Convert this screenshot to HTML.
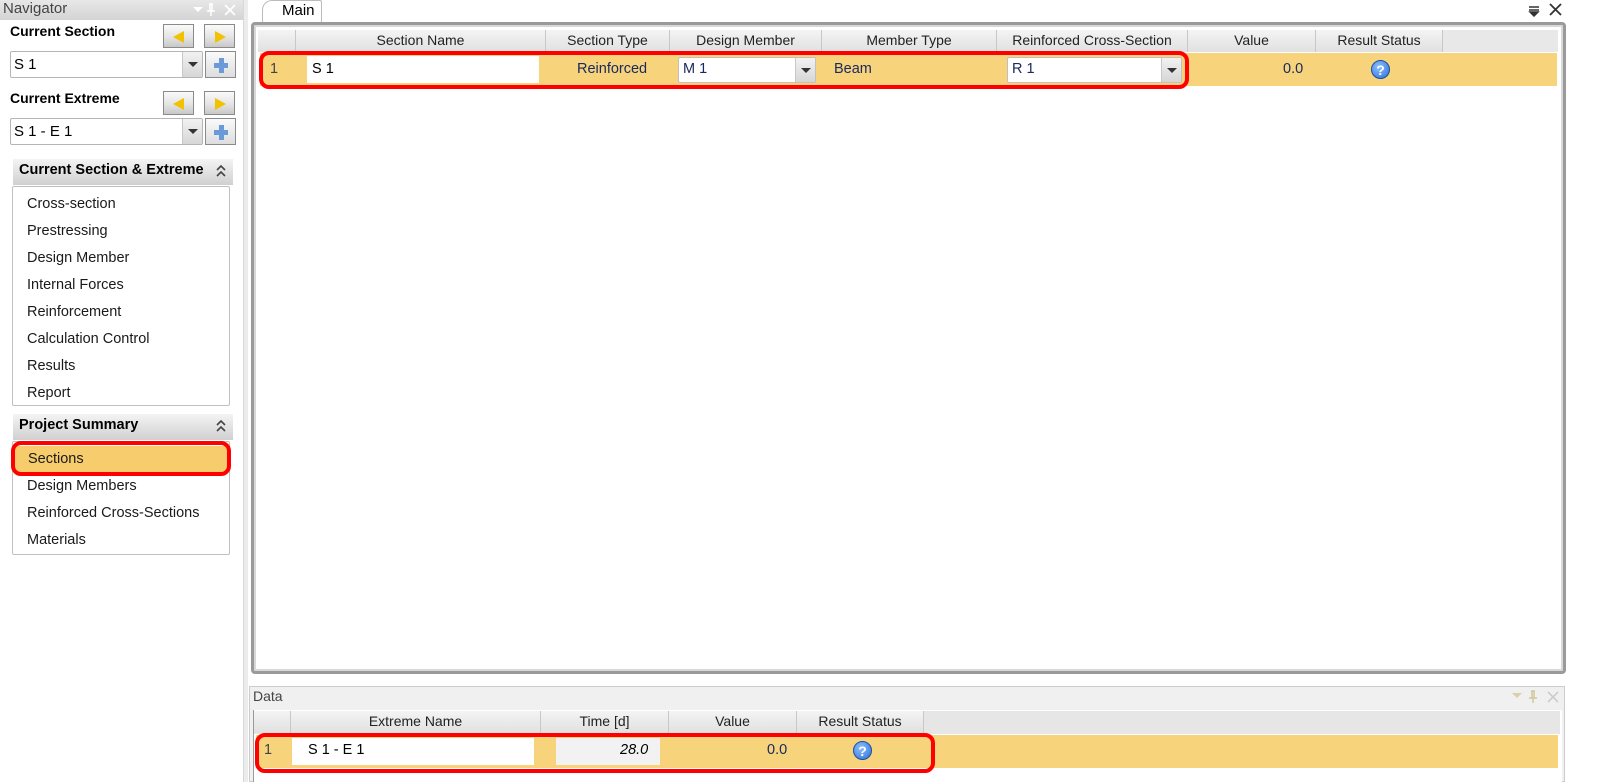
<!DOCTYPE html>
<html><head><meta charset="utf-8"><style>
*{box-sizing:border-box;margin:0;padding:0}
body{width:1598px;height:782px;position:relative;overflow:hidden;background:#fff;font-family:"Segoe UI","Liberation Sans",sans-serif;font-size:14px;color:#000}
.a{position:absolute}
.btn{position:absolute;width:31px;height:24px;border:1px solid #8a8a8a;background:linear-gradient(#fafafa,#e4e4e4 55%,#c8c8c8);}
.tri{position:absolute;top:6px;width:0;height:0;border-top:6px solid transparent;border-bottom:6px solid transparent}
.combo{position:absolute;left:10px;width:193px;height:27px;border:1px solid #b5b5b5;border-radius:2px;background:#fff;padding:4px 0 0 3px;font-size:15px}
.dd{position:absolute;right:0;top:0;width:20px;height:25px;background:linear-gradient(#f2f2f2,#d6d6d6);border-left:1px solid #c8c8c8}
.dd:after{content:"";position:absolute;left:5px;top:10px;border-left:5px solid transparent;border-right:5px solid transparent;border-top:5px solid #333}
.plus{position:absolute;left:205px;width:31px;height:27px;border:1px solid #8a8a8a;background:linear-gradient(#fafafa,#ddd)}
.plus:before{content:"";position:absolute;left:8px;top:11px;width:14px;height:5px;background:#6a9ad8}
.plus:after{content:"";position:absolute;left:13px;top:6px;width:5px;height:15px;background:#6a9ad8}
.ph{position:absolute;left:13px;width:220px;height:26px;background:linear-gradient(#f4f4f4,#d0d0d0);font-weight:bold;font-size:14.5px}
.ph .t{position:absolute;left:6px;top:3px;width:188px;white-space:nowrap;overflow:hidden}
.ph svg{position:absolute;right:7px;top:6px}
.list{position:absolute;left:12px;width:218px;border:1px solid #c0c0c0;border-radius:2px;background:#fff}
.list div{height:27px;padding:5px 0 0 14px;font-size:14.5px;color:#1a1a1a}
.hdr{position:absolute;height:22px;background:linear-gradient(#f4f4f4,#e0e0e0);border-right:1px solid #c8c8c8;text-align:center;font-size:14px;padding-top:2px;color:#222}
.cell{position:absolute;font-size:14.5px;color:#1a2a60}
.red{position:absolute;border:4px solid #f00;border-radius:10px}
.q{position:absolute;width:19px;height:19px;border-radius:50%;background:radial-gradient(circle at 40% 35%,#8ec0ff,#2a6fd8);color:#fff;font-weight:bold;font-size:14px;text-align:center;line-height:19px;border:1px solid #1b4fa0;font-family:"Liberation Sans",sans-serif}
</style></head><body>

<!-- Navigator -->
<div class="a" style="left:0;top:0;width:243px;height:20px;background:linear-gradient(#e8e8e8,#d4d4d4);font-size:15px;color:#444;padding:0 0 0 3px">Navigator
<span class="a" style="left:193px;top:7px;border-left:5px solid transparent;border-right:5px solid transparent;border-top:5px solid #fff"></span>
<svg class="a" style="left:206px;top:3px" width="10" height="14"><path d="M3 1h4M4 1v7M6 1v7M1 8h8M5 8v5" stroke="#fff" stroke-width="1.5" fill="none"/></svg>
<svg class="a" style="left:224px;top:4px" width="12" height="12"><path d="M1 1L11 11M11 1L1 11" stroke="#fff" stroke-width="1.6"/></svg>
</div>
<div class="a" style="left:243px;top:0;width:5px;height:782px;background:#ececec;border-left:1px solid #d8d8d8"></div>

<div class="a" style="left:10px;top:23px;font-weight:bold;font-size:14px">Current Section</div>
<div class="btn" style="left:163px;top:24px"><div class="tri" style="left:9px;border-right:11px solid #f2c200"></div></div>
<div class="btn" style="left:204px;top:24px"><div class="tri" style="left:10px;border-left:11px solid #f2c200"></div></div>
<div class="combo" style="top:51px">S 1<div class="dd"></div></div>
<div class="plus" style="top:51px"></div>

<div class="a" style="left:10px;top:90px;font-weight:bold;font-size:14px">Current Extreme</div>
<div class="btn" style="left:163px;top:91px"><div class="tri" style="left:9px;border-right:11px solid #f2c200"></div></div>
<div class="btn" style="left:204px;top:91px"><div class="tri" style="left:10px;border-left:11px solid #f2c200"></div></div>
<div class="combo" style="top:118px">S 1 - E 1<div class="dd"></div></div>
<div class="plus" style="top:118px"></div>

<div class="ph" style="top:159px"><div class="t">Current Section &amp; Extreme</div><svg width="10" height="12"><path d="M1 5L5 1L9 5M1 11L5 7L9 11" stroke="#444" stroke-width="1.6" fill="none"/></svg></div>
<div class="list" style="top:186px;height:220px;padding-top:4px">
<div>Cross-section</div><div>Prestressing</div><div>Design Member</div><div>Internal Forces</div><div>Reinforcement</div><div>Calculation Control</div><div>Results</div><div>Report</div></div>

<div class="ph" style="top:414px"><div class="t">Project Summary</div><svg width="10" height="12"><path d="M1 5L5 1L9 5M1 11L5 7L9 11" stroke="#444" stroke-width="1.6" fill="none"/></svg></div>
<div class="list" style="top:441px;height:114px;padding-top:4px">
<div style="background:#f7cc6c;margin:0 1px">Sections</div><div>Design Members</div><div>Reinforced Cross-Sections</div><div>Materials</div></div>
<div class="red" style="left:11px;top:441px;width:220px;height:35px"></div>

<!-- Main tab -->
<div class="a" style="left:262px;top:0;width:60px;height:23px;background:#fff;border:1px solid #bbb;border-bottom:none;border-radius:10px 2px 0 0;font-size:15px;padding:1px 0 0 19px">Main</div>
<svg class="a" style="left:1528px;top:5px" width="12" height="12"><path d="M1 2h10M1 5h10M2 7L6 11L10 7Z" stroke="#333" stroke-width="1.5" fill="#333"/></svg>
<svg class="a" style="left:1549px;top:3px" width="13" height="13"><path d="M1 1L12 12M12 1L1 12" stroke="#333" stroke-width="1.8"/></svg>

<div class="a" style="left:251px;top:22px;width:1315px;height:652px;border:3px solid #9a9a9a;border-radius:4px;background:#fff;box-shadow:inset 0 0 0 2px #d8d8d8"></div>
<div class="a" style="left:258px;top:30px;width:1300px;height:22px;background:#e8e8e8"></div>
<div class="hdr" style="left:258px;top:30px;width:38px"></div>
<div class="hdr" style="left:296px;top:30px;width:250px">Section Name</div>
<div class="hdr" style="left:546px;top:30px;width:124px">Section Type</div>
<div class="hdr" style="left:670px;top:30px;width:152px">Design Member</div>
<div class="hdr" style="left:822px;top:30px;width:175px">Member Type</div>
<div class="hdr" style="left:997px;top:30px;width:191px">Reinforced Cross-Section</div>
<div class="hdr" style="left:1188px;top:30px;width:128px">Value</div>
<div class="hdr" style="left:1316px;top:30px;width:127px">Result Status</div>

<div class="a" style="left:260px;top:53px;width:1297px;height:33px;background:#f7d37c"></div>
<div class="cell" style="left:270px;top:61px;color:#444">1</div>
<div class="a" style="left:307px;top:56px;width:232px;height:27px;background:#fff"></div>
<div class="cell" style="left:312px;top:61px;color:#000">S 1</div>
<div class="cell" style="left:577px;top:61px">Reinforced</div>
<div class="a" style="left:678px;top:57px;width:138px;height:26px;background:#fff;border:1px solid #c0c0c0;border-radius:2px"><div class="dd" style="height:24px"></div></div>
<div class="cell" style="left:683px;top:61px">M 1</div>
<div class="cell" style="left:834px;top:61px">Beam</div>
<div class="a" style="left:1007px;top:57px;width:175px;height:26px;background:#fff;border:1px solid #c0c0c0;border-radius:2px"><div class="dd" style="height:24px"></div></div>
<div class="cell" style="left:1012px;top:61px">R 1</div>
<div class="cell" style="left:1283px;top:61px">0.0</div>
<div class="q" style="left:1371px;top:60px">?</div>
<div class="red" style="left:259px;top:51px;width:930px;height:38px"></div>

<!-- Data panel -->
<div class="a" style="left:249px;top:686px;width:1316px;height:96px;border:1px solid #ccc;background:#f0f0f0"></div>
<div class="a" style="left:253px;top:688px;font-size:14px;color:#444">Data</div>
<div class="a" style="left:1512px;top:693px;border-left:5px solid transparent;border-right:5px solid transparent;border-top:5px solid #d8d0a8"></div>
<svg class="a" style="left:1528px;top:690px" width="10" height="14"><path d="M3 1h4M4 1v7M6 1v7M1 8h8M5 8v5" stroke="#d0c8a0" stroke-width="1.5" fill="none"/></svg>
<svg class="a" style="left:1547px;top:691px" width="12" height="12"><path d="M1 1L11 11M11 1L1 11" stroke="#ccc" stroke-width="1.6"/></svg>
<div class="a" style="left:253px;top:710px;width:1309px;height:72px;background:#fff;border-left:1px solid #999"></div>
<div class="a" style="left:254px;top:711px;width:1306px;height:23px;background:#e6e6e6"></div>
<div class="hdr" style="left:254px;top:711px;width:37px"></div>
<div class="hdr" style="left:291px;top:711px;width:250px">Extreme Name</div>
<div class="hdr" style="left:541px;top:711px;width:128px">Time [d]</div>
<div class="hdr" style="left:669px;top:711px;width:128px">Value</div>
<div class="hdr" style="left:797px;top:711px;width:127px">Result Status</div>
<div class="a" style="left:256px;top:735px;width:1302px;height:33px;background:#f7d37c"></div>
<div class="cell" style="left:264px;top:742px;color:#444">1</div>
<div class="a" style="left:292px;top:738px;width:242px;height:27px;background:#fff"></div>
<div class="cell" style="left:308px;top:742px;color:#000">S 1 - E 1</div>
<div class="a" style="left:556px;top:738px;width:104px;height:27px;background:#f2f2f2"></div>
<div class="cell" style="left:620px;top:742px;color:#000;font-style:italic">28.0</div>
<div class="cell" style="left:767px;top:742px">0.0</div>
<div class="q" style="left:853px;top:741px">?</div>
<div class="red" style="left:255px;top:733px;width:680px;height:40px"></div>
</body></html>
